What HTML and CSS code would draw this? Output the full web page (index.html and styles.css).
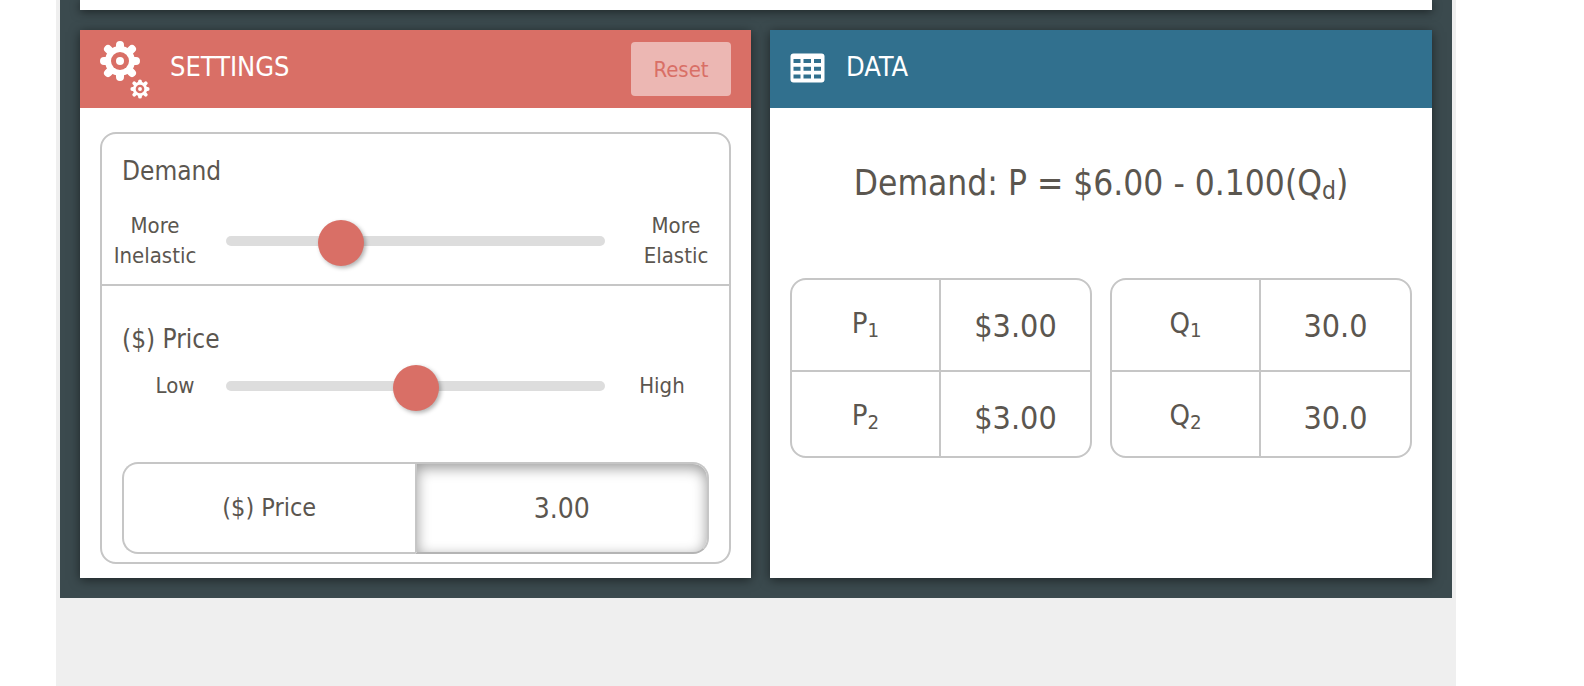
FILE: index.html
```html
<!DOCTYPE html>
<html lang="en">
<head>
    <meta charset="UTF-8">
    <meta name="viewport" content="width=device-width, initial-scale=1.0">
    <title>Demand and Price</title>
    <link rel="stylesheet" href="styles.css">
</head>
<body>
    <main class="page">
        <div class="board">
            <section class="graph"></section>

            <div class="panels">
                <section class="panel">
                    <header class="panel-header settings-header">
                        <svg class="gears" width="50" height="60" viewBox="0 0 50 60" aria-hidden="true">
                            <defs>
                                <g id="gear">
                                    <g stroke="#fff" stroke-width="8" stroke-linecap="round">
                                        <path d="M0-16V16M-16 0H16M-12-12L12 12M-12 12L12-12"/>
                                    </g>
                                    <circle r="15" fill="#fff"/>
                                    <circle r="9" fill="#d96f66"/>
                                    <circle r="4" fill="#fff"/>
                                </g>
                            </defs>
                            <use href="#gear" transform="translate(20 22)"/>
                            <use href="#gear" transform="translate(40 50) scale(.48)"/>
                        </svg>
                        <h2>SETTINGS</h2>
                        <button type="button" class="reset">Reset</button>
                    </header>
                    <div class="panel-body">
                        <div class="settings-box">
                            <div class="demand">
                                <h3><label for="demand">Demand</label></h3>
                                <div class="slider-row">
                                    <span>More<br>Inelastic</span>
                                    <input type="range" id="demand" min="0" max="80" value="22">
                                    <span>More<br>Elastic</span>
                                </div>
                            </div>
                            <div class="price">
                                <h3><label for="price">($) Price</label></h3>
                                <div class="slider-row">
                                    <span class="low">Low</span>
                                    <input type="range" id="price" min="0" max="6" step="0.1" value="3">
                                    <span class="high">High</span>
                                </div>
                                <div class="price-field">
                                    <label for="price-value">($) Price</label>
                                    <input type="text" id="price-value" value="3.00">
                                </div>
                            </div>
                        </div>
                    </div>
                </section>

                <section class="panel">
                    <header class="panel-header data-header">
                        <svg width="36" height="32" viewBox="0 0 36 32" aria-hidden="true">
                            <rect x=".5" y=".5" width="34" height="29" rx="3" fill="#fff"/>
                            <path fill="#31708e" d="M3.500 6h7v4h-7zM13.500 6h7.500v4h-7.500zM24 6h7v4h-7zM3.500 13.700h7v4h-7zM13.500 13.700h7.500v4h-7.500zM24 13.700h7v4h-7zM3.500 21.400h7v4h-7zM13.500 21.400h7.500v4h-7.500zM24 21.400h7v4h-7z"/>
                        </svg>
                        <h2>DATA</h2>
                    </header>
                    <div class="panel-body">
                        <p class="formula">Demand: P = $6.00 - 0.100(Q<sub>d</sub>)</p>
                        <div class="tables">
                            <table>
                                <tr><th scope="row">P<sub>1</sub></th><td>$3.00</td></tr>
                                <tr><th scope="row">P<sub>2</sub></th><td>$3.00</td></tr>
                            </table>
                            <table>
                                <tr><th scope="row">Q<sub>1</sub></th><td>30.0</td></tr>
                                <tr><th scope="row">Q<sub>2</sub></th><td>30.0</td></tr>
                            </table>
                        </div>
                    </div>
                </section>
            </div>
        </div>
    </main>
</body>
</html>
```
FILE: styles.css
```css
* {
    box-sizing: border-box;
}
body {
    margin: 0;
    padding: 0 128px 0 56px;
    background: #fff;
    color: #5b564f;
    font-family: Tahoma, 'DejaVu Sans Condensed', 'DejaVu Sans', sans-serif;
    font-size: 22px;
    line-height: 30px;
}
h2, h3, p {
    margin: 0;
    font-weight: normal;
}
h2 {
    font-size: 27px;
}
h3 {
    font-size: 26px;
}
button, input {
    font-family: inherit;
    color: inherit;
}
sub {
    font-size: 70%;
    line-height: 0;
    vertical-align: -4px;
}
.page {
    min-height: 100vh;
    padding: 0 4px;
    background: #efefef;
}
.board {
    padding: 0 20px 20px;
    background: #3b4a4e;
}
.graph {
    height: 10px;
    margin-bottom: 20px;
    background: #fff;
    box-shadow: 0 2px 10px rgba(0, 0, 0, 0.5);
}
.panels {
    display: grid;
    grid-template-columns: 671fr 662fr;
    gap: 19px;
}
.panel {
    background: #fff;
    box-shadow: 0 2px 10px rgba(0, 0, 0, 0.5);
}
.panel-header {
    display: flex;
    align-items: center;
    gap: 20px;
    height: 78px;
    padding: 0 20px;
    color: #fff;
}
.panel-header h2 {
    padding-bottom: 4px;
}
.settings-header {
    background: #d96f66;
}
.data-header {
    background: #31708e;
}
.reset {
    width: 100px;
    height: 54px;
    margin-left: auto;
    border: none;
    border-radius: 4px;
    background: #ecb7b3;
    color: #d96f66;
    font-size: 22px;
    cursor: pointer;
}
.panel-body {
    padding: 24px 20px 14px;
}

/* settings */
.settings-box {
    border: 2px solid #c6c6c6;
    border-radius: 16px;
}
.settings-box h3 {
    padding-left: 20px;
}
.demand {
    padding: 22px 0 13px;
    border-bottom: 2px solid #c6c6c6;
}
.demand h3 {
    margin-bottom: 25px;
}
.price {
    padding: 38px 0 8px;
}
.price h3 {
    margin-bottom: 9px;
}
.slider-row {
    display: grid;
    grid-template-columns: 106px 1fr 106px;
    gap: 18px;
    align-items: center;
    text-align: center;
}
.low {
    padding-left: 40px;
}
.high {
    padding-right: 28px;
}
input[type="range"] {
    -webkit-appearance: none;
    appearance: none;
    width: 100%;
    height: 46px;
    margin: 0;
    background: none;
}
input[type="range"]::-webkit-slider-runnable-track {
    height: 10px;
    border-radius: 5px;
    background: #ddd;
}
input[type="range"]::-webkit-slider-thumb {
    -webkit-appearance: none;
    width: 46px;
    height: 46px;
    margin-top: -16px;
    border-radius: 50%;
    background: #d96f66;
    box-shadow: 2px 2px 4px rgba(0, 0, 0, 0.3);
}
.price-field {
    display: flex;
    height: 92px;
    margin: 53px 20px 0;
    text-align: center;
}
.price-field label {
    display: flex;
    flex: 1;
    align-items: center;
    justify-content: center;
    border: 2px solid #c6c6c6;
    border-right: none;
    border-radius: 16px 0 0 16px;
    font-size: 25px;
}
.price-field input {
    flex: 1;
    min-width: 0;
    padding: 0;
    border: 2px solid #c6c6c6;
    border-bottom-color: #b4b4b4;
    border-radius: 0 16px 16px 0;
    box-shadow: inset 0 4px 14px rgba(0, 0, 0, 0.4);
    font-size: 28px;
    text-align: center;
}

/* data */
.formula {
    padding: 31px 0 75px;
    font-size: 35px;
    line-height: 40px;
    text-align: center;
}
.tables {
    display: grid;
    grid-template-columns: 1fr 1fr;
    gap: 18px;
}
table {
    width: 100%;
    border: 2px solid #c6c6c6;
    border-radius: 16px;
    border-spacing: 0;
    table-layout: fixed;
    line-height: 40px;
    text-align: center;
}
th, td {
    height: 84px;
    padding: 0;
    vertical-align: top;
}
th {
    padding-top: 23px;
    border-right: 2px solid #c6c6c6;
    font-size: 29px;
    font-weight: normal;
}
td {
    padding-top: 26px;
    font-size: 32px;
}
tr:first-child th, tr:first-child td {
    height: 92px;
    border-bottom: 2px solid #c6c6c6;
}
```
